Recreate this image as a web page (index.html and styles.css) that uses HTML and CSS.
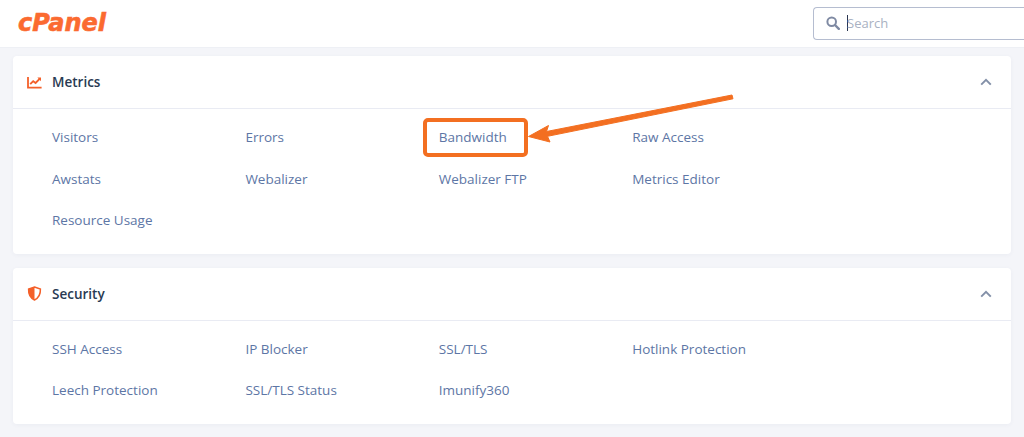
FILE: index.html
```html
<!DOCTYPE html>
<html lang="en">
<head>
<meta charset="utf-8">
<title>cPanel</title>
<link rel="stylesheet" href="styles.css">
</head>
<body>
<header class="topbar">
  <span class="logo">cPanel</span>
  <div class="search">
    <svg class="search-icon" width="14" height="14" viewBox="0 0 14 14" aria-hidden="true"><circle cx="5.700" cy="5.700" r="4.300" fill="none" stroke="#7f8aa3" stroke-width="2"/><path d="M9 9l3.800 3.800" stroke="#7f8aa3" stroke-width="2.400" stroke-linecap="round"/></svg>
    <span class="caret"></span>
    <span class="placeholder">Search</span>
  </div>
</header>
<main class="content">
  <section class="card">
    <div class="card-head">
      <svg class="card-icon" width="15" height="13" viewBox="0 0 15 13" aria-hidden="true"><path d="M1 1v10.600h13.600" fill="none" stroke="#f4602a" stroke-width="1.800"/><path d="M3.200 8.200l3-3 2.400 1.800 4-4.200" fill="none" stroke="#f4602a" stroke-width="1.900"/><path d="M10.400 1.600h3.600v3.600z" fill="#f4602a"/></svg>
      <h2 class="card-title">Metrics</h2>
      <svg class="chevron" width="12" height="8" viewBox="0 0 12 8" aria-hidden="true"><path d="M1.200 6.600L6 1.900l4.800 4.700" fill="none" stroke="#8390a8" stroke-width="2"/></svg>
    </div>
    <div class="links">
      <a class="link">Visitors</a><a class="link">Errors</a><a class="link">Bandwidth</a><a class="link">Raw Access</a>
      <a class="link">Awstats</a><a class="link">Webalizer</a><a class="link">Webalizer FTP</a><a class="link">Metrics Editor</a>
      <a class="link">Resource Usage</a>
    </div>
  </section>
  <section class="card">
    <div class="card-head">
      <svg class="card-icon" width="15" height="15" viewBox="0 0 15 15" aria-hidden="true"><path d="M7.500 1L13.400 3c.2 4.600-1.400 8.800-5.900 11C3 11.800 1.400 7.600 1.600 3z" fill="#fff" stroke="#f4602a" stroke-width="1.500"/><path d="M7.500 1L1.600 3c-.2 4.600 1.400 8.800 5.900 11z" fill="#f4602a"/></svg>
      <h2 class="card-title">Security</h2>
      <svg class="chevron" width="12" height="8" viewBox="0 0 12 8" aria-hidden="true"><path d="M1.200 6.600L6 1.900l4.800 4.700" fill="none" stroke="#8390a8" stroke-width="2"/></svg>
    </div>
    <div class="links">
      <a class="link">SSH Access</a><a class="link">IP Blocker</a><a class="link">SSL/TLS</a><a class="link">Hotlink Protection</a>
      <a class="link">Leech Protection</a><a class="link">SSL/TLS Status</a><a class="link">Imunify360</a>
    </div>
  </section>
</main>
<div class="highlight"></div>
<svg class="arrow" width="1024" height="437" viewBox="0 0 1024 437" aria-hidden="true"><path d="M528.500 136.500L548.500 125.500L546.500 131.500L732 95L733 98.800L547.500 136.300L550 142z" fill="#f36f21" stroke="#f36f21" stroke-width="1" stroke-linejoin="round"/></svg>
</body>
</html>
```
FILE: styles.css
```css
* { box-sizing: border-box; }
html, body { margin: 0; height: 100%; }
body {
  background: #f4f5f9;
  font-family: "Open Sans", "Liberation Sans", sans-serif;
  overflow: hidden;
  position: relative;
}
.topbar {
  height: 48px;
  background: #fff;
  border-bottom: 1px solid #eef0f5;
  display: flex;
  align-items: center;
  justify-content: space-between;
  padding-left: 18px;
}
.logo {
  font-family: "DejaVu Sans", sans-serif;
  font-weight: 700;
  font-style: italic;
  font-size: 24px;
  line-height: 30px;
  color: #fb6a30;
  -webkit-text-stroke: .6px #fb6a30;
  position: relative;
  top: -1px;
}
.search {
  width: 211px;
  height: 33px;
  margin-top: -1px;
  background: #fff;
  border: 1px solid #b5bdd0;
  border-right: 0;
  border-radius: 4px 0 0 4px;
  display: flex;
  align-items: center;
  padding-left: 12px;
}
.caret { width: 1px; height: 16px; background: #2a3550; margin-left: 7px; }
.placeholder { font-size: 13px; color: #a9b1c2; margin-left: -1px; }
.content {
  padding: 8px 13px 0;
  display: flex;
  flex-direction: column;
  gap: 14px;
}
.card {
  background: #fff;
  border-radius: 4px;
  box-shadow: 0 1px 4px rgba(60, 70, 110, .05);
  padding-bottom: 12px;
}
.card-head {
  height: 53px;
  border-bottom: 1px solid #e9ebf3;
  display: flex;
  align-items: center;
  padding: 0 19px 0 14px;
}
.card-icon { flex: none; }
.card-title {
  margin: 0 0 0 10px;
  flex: 1;
  font-size: 13.500px;
  font-weight: 600;
  color: #293a52;
}
.links {
  display: grid;
  grid-template-columns: repeat(4, 193.400px) 1fr;
  grid-auto-rows: 41.500px;
  padding: 8px 0 0 39px;
}
.link {
  font-size: 13.500px;
  line-height: 41px;
  color: #5d76a5;
}
.links .link:nth-child(4n+1) { grid-column: 1; }
.highlight {
  position: absolute;
  left: 423px;
  top: 118px;
  width: 105px;
  height: 39px;
  border: 4px solid #f36f21;
  border-radius: 5px;
}
.arrow { position: absolute; left: 0; top: 0; pointer-events: none; }
```
